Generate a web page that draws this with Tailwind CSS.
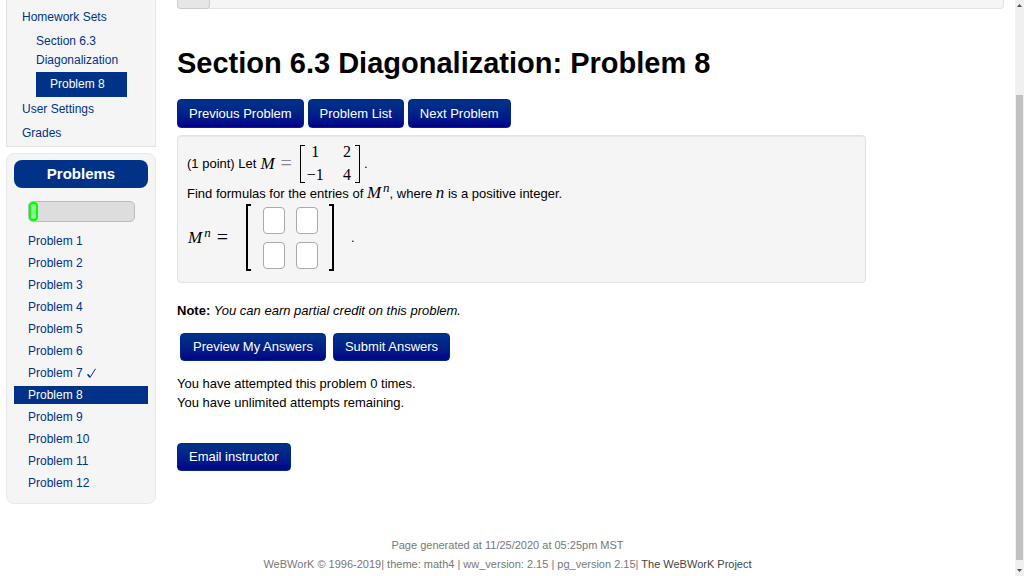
<!DOCTYPE html>
<html lang="en">
<head>
    <meta charset="UTF-8">
    <meta name="viewport" content="width=device-width, initial-scale=1.0">
    <title>Section 6.3 Diagonalization: Problem 8</title>
    <script src="https://cdn.jsdelivr.net/npm/@tailwindcss/browser@4"></script>
</head>
<body class="flex h-screen overflow-hidden bg-white font-['Liberation_Sans',Arial,sans-serif] text-[13px] leading-[19px] text-black">

    <div class="flex-1 flex flex-col min-w-0">
        <div class="flex pl-[6px] pr-[11px]">

            <!-- Sidebar -->
            <aside class="w-[150px] shrink-0 text-[12px] leading-[18px] text-[#003388]">
                <nav aria-label="Main menu" class="h-[147px] border border-t-0 border-[#e3e3e3] bg-[#f5f5f5] pl-[15px] pt-2">
                    <a href="#" class="block">Homework Sets</a>
                    <div class="pl-[14px] pt-[6px] pb-[3px]">
                        <a href="#" class="block leading-[19px]">Section 6.3 Diagonalization</a>
                        <a href="#" class="block w-[91px] mt-[2px] bg-[#003388] text-white pl-[14px] leading-[25px]">Problem 8</a>
                    </div>
                    <a href="#" class="block">User Settings</a>
                    <a href="#" class="block mt-[6px]">Grades</a>
                </nav>

                <nav aria-label="Problems" class="mt-[6px] rounded-lg border border-[#e8e8e8] bg-[#f5f5f5] px-[7px] pt-[6px] pb-[11px]">
                    <h2 class="rounded-lg bg-[#003388] text-center text-[15px] leading-[28px] font-bold text-white">Problems</h2>
                    <div class="ml-[14px] mt-[13px] mr-[13px] h-[21px] rounded-[5px] border border-[#bbb] bg-[#ddd]">
                        <div class="h-[19px] w-[9px] rounded-[4px] border-2 border-[#00ff00] bg-[#88ff88]"></div>
                    </div>
                    <ul class="mt-[10px] flex flex-col gap-1">
                        <li><a href="#" class="block pl-[14px]">Problem 1</a></li>
                        <li><a href="#" class="block pl-[14px]">Problem 2</a></li>
                        <li><a href="#" class="block pl-[14px]">Problem 3</a></li>
                        <li><a href="#" class="block pl-[14px]">Problem 4</a></li>
                        <li><a href="#" class="block pl-[14px]">Problem 5</a></li>
                        <li><a href="#" class="block pl-[14px]">Problem 6</a></li>
                        <li><a href="#" class="flex items-center gap-1 pl-[14px]">Problem 7
                            <svg class="h-[11px] w-[9px]" viewBox="0 0 9 11" fill="none" stroke="currentColor"><path d="M.5 6.500 3 9.500 8.500 .8" stroke-width="1"/><path d="M.8 6.500 3 9" stroke-width="1.5"/></svg>
                        </a></li>
                        <li><a href="#" class="block bg-[#003388] pl-[14px] text-white">Problem 8</a></li>
                        <li><a href="#" class="block pl-[14px]">Problem 9</a></li>
                        <li><a href="#" class="block pl-[14px]">Problem 10</a></li>
                        <li><a href="#" class="block pl-[14px]">Problem 11</a></li>
                        <li><a href="#" class="block pl-[14px]">Problem 12</a></li>
                    </ul>
                </nav>
            </aside>

            <!-- Main content -->
            <main class="ml-[21px] flex-1 min-w-0">
                <div class="h-[9px] rounded-b border border-t-0 border-[#e3e3e3] bg-[#f5f5f5]">
                    <div class="-ml-px h-[9px] w-[33px] rounded-b border border-t-0 border-[#ccc] bg-[#e6e6e6]"></div>
                </div>

                <h1 class="mt-[34px] text-[29px] leading-[40px] font-bold">Section 6.3 Diagonalization: Problem 8</h1>

                <div class="mt-4 flex gap-1">
                    <a href="#" class="rounded border border-[#002a80] bg-linear-to-b from-[#003388] to-[#000088] px-[11px] leading-[27px] text-white">Previous Problem</a>
                    <a href="#" class="rounded border border-[#002a80] bg-linear-to-b from-[#003388] to-[#000088] px-[11px] leading-[27px] text-white">Problem List</a>
                    <a href="#" class="rounded border border-[#002a80] bg-linear-to-b from-[#003388] to-[#000088] px-[11px] leading-[27px] text-white">Next Problem</a>
                </div>

                <form>
                    <section class="mt-[7px] h-[148px] w-5/6 rounded border border-[#e3e3e3] bg-[#f5f5f5] px-[9px] pt-[7px] inset-shadow-2xs">
                        <div class="flex items-center">
                            <span>(1 point) Let</span>
                            <span class="ml-1 font-['Liberation_Serif',serif] text-[17px] italic">M</span>
                            <span class="mx-[6px] font-['Liberation_Serif',serif] text-[20px] text-[#888]">=</span>
                            <span class="ml-[2px] h-[38px] w-[5px] border border-r-0 border-black"></span>
                            <div class="mx-[2px] grid grid-cols-2 gap-x-[10px] gap-y-[5px] text-center font-['Liberation_Serif',serif] text-[16px] leading-[18px]">
                                <span>1</span><span class="text-right">2</span>
                                <span>−1</span><span class="text-right">4</span>
                            </div>
                            <span class="ml-[2px] h-[38px] w-[5px] border border-l-0 border-black"></span>
                            <span class="ml-1">.</span>
                        </div>
                        <p>Find formulas for the entries of <span class="font-['Liberation_Serif',serif] text-[17px] italic leading-none">M<sup class="ml-[2px] text-[13px]">n</sup></span>, where <span class="font-['Liberation_Serif',serif] text-[17px] italic leading-none">n</span> is a positive integer.</p>
                        <div class="mt-px flex items-center pl-px">
                            <span class="font-['Liberation_Serif',serif] text-[17px] italic">M<sup class="ml-[2px] text-[13px]">n</sup></span>
                            <span class="ml-[6px] font-['Liberation_Serif',serif] text-[20px]">=</span>
                            <span class="ml-[18px] h-[67px] w-[5px] border-2 border-r-0 border-black"></span>
                            <div class="ml-3 mr-[11px] grid grid-cols-2 gap-x-[11px] gap-y-2">
                                <input type="text" aria-label="Row 1 column 1" class="h-[27px] w-[22px] rounded border border-[#aaa] bg-white">
                                <input type="text" aria-label="Row 1 column 2" class="h-[27px] w-[22px] rounded border border-[#aaa] bg-white">
                                <input type="text" aria-label="Row 2 column 1" class="h-[27px] w-[22px] rounded border border-[#aaa] bg-white">
                                <input type="text" aria-label="Row 2 column 2" class="h-[27px] w-[22px] rounded border border-[#aaa] bg-white">
                            </div>
                            <span class="h-[67px] w-[5px] border-2 border-l-0 border-black"></span>
                            <span class="ml-[17px]">.</span>
                        </div>
                    </section>

                    <p class="mt-[18px]"><b>Note:</b> <i>You can earn partial credit on this problem.</i></p>

                    <div class="mt-[13px] ml-[3px] flex gap-[7px]">
                        <button type="button" class="rounded border border-[#002a80] bg-linear-to-b from-[#003388] to-[#000088] px-3 leading-[26px] text-white">Preview My Answers</button>
                        <button type="button" class="rounded border border-[#002a80] bg-linear-to-b from-[#003388] to-[#000088] px-[11px] leading-[26px] text-white">Submit Answers</button>
                    </div>
                </form>

                <p class="mt-[13px]">You have attempted this problem 0 times.<br>You have unlimited attempts remaining.</p>

                <button type="button" class="mt-[31px] rounded border border-[#002a80] bg-linear-to-b from-[#003388] to-[#000088] px-[11px] leading-[26px] text-white">Email instructor</button>
            </main>
        </div>

        <footer class="mt-8 text-center text-[11px] text-[#777]">
            <p>Page generated at 11/25/2020 at 05:25pm MST</p>
            <p>WeBWorK © 1996-2019| theme: math4 | ww_version: 2.15 | pg_version 2.15| <a href="#" class="text-[#444]">The WeBWorK Project</a></p>
        </footer>
    </div>

    <!-- Scrollbar -->
    <div class="flex h-full w-[9px] shrink-0 flex-col items-center bg-[#f0f0f0] py-1">
        <svg class="h-[3px] w-[5px]" viewBox="0 0 5 3"><path d="M0 3 2.500 0 5 3z" fill="#505050"/></svg>
        <div class="mt-[88px] mb-[9px] w-[7px] flex-1 bg-[#c1c1c1]"></div>
        <svg class="h-[3px] w-[5px]" viewBox="0 0 5 3"><path d="M0 0 2.500 3 5 0z" fill="#505050"/></svg>
    </div>
</body>
</html>
